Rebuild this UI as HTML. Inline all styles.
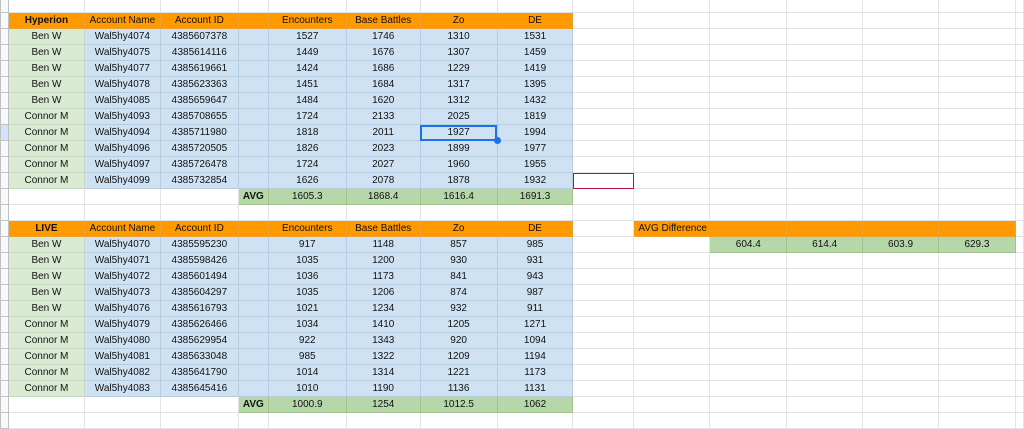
<!DOCTYPE html><html><head><style>
body{margin:0;width:1024px;height:425px;overflow:hidden;background:#fff;font-family:"Liberation Sans",Arial,sans-serif;font-size:10px;color:#111}
table{position:absolute;left:0;top:-4px;border-collapse:collapse;table-layout:fixed}
td{height:15px;border:1px solid #e2e2e2;padding:1px 0 0 0;box-sizing:border-box;text-align:center;white-space:nowrap;overflow:hidden;line-height:14px;vertical-align:middle}
tr{height:16px}
td.rh{background:#f8f9fa;border-color:#c0c0c0}
td.rs{background:#d3e3fd}
.o{background:#ff9900;border-color:#f0a030}
.g{background:#d9ead3;border-color:#c8d8c0}
.b{background:#cfe2f3;border-color:#b8cce0}
.a{background:#b6d7a8;border-color:#a0c090}
.l{text-align:left;padding-left:4px}
.sel{outline:2px solid #1a73e8;outline-offset:-2px;position:relative;overflow:visible}
.red{outline:1px solid #b0104a;outline-offset:-1px}
</style></head><body>
<table>
<colgroup><col style="width:8px"><col style="width:76px"><col style="width:76px"><col style="width:78px"><col style="width:30px"><col style="width:78px"><col style="width:74px"><col style="width:77px"><col style="width:76px"><col style="width:61px"><col style="width:76px"><col style="width:77px"><col style="width:76px"><col style="width:76px"><col style="width:77px"><col style="width:8px"></colgroup>
<tr><td class="rh"></td><td></td><td></td><td></td><td></td><td></td><td></td><td></td><td></td><td></td><td></td><td></td><td></td><td></td><td></td><td></td></tr>
<tr><td class="rh"></td><td class="o"><b>Hyperion</b></td><td class="o">Account Name</td><td class="o">Account ID</td><td class="o"></td><td class="o">Encounters</td><td class="o">Base Battles</td><td class="o">Zo</td><td class="o">DE</td><td></td><td></td><td></td><td></td><td></td><td></td><td></td></tr>
<tr><td class="rh"></td><td class="g">Ben W</td><td class="b">Wal5hy4074</td><td class="b">4385607378</td><td class="b"></td><td class="b">1527</td><td class="b">1746</td><td class="b">1310</td><td class="b">1531</td><td></td><td></td><td></td><td></td><td></td><td></td><td></td></tr>
<tr><td class="rh"></td><td class="g">Ben W</td><td class="b">Wal5hy4075</td><td class="b">4385614116</td><td class="b"></td><td class="b">1449</td><td class="b">1676</td><td class="b">1307</td><td class="b">1459</td><td></td><td></td><td></td><td></td><td></td><td></td><td></td></tr>
<tr><td class="rh"></td><td class="g">Ben W</td><td class="b">Wal5hy4077</td><td class="b">4385619661</td><td class="b"></td><td class="b">1424</td><td class="b">1686</td><td class="b">1229</td><td class="b">1419</td><td></td><td></td><td></td><td></td><td></td><td></td><td></td></tr>
<tr><td class="rh"></td><td class="g">Ben W</td><td class="b">Wal5hy4078</td><td class="b">4385623363</td><td class="b"></td><td class="b">1451</td><td class="b">1684</td><td class="b">1317</td><td class="b">1395</td><td></td><td></td><td></td><td></td><td></td><td></td><td></td></tr>
<tr><td class="rh"></td><td class="g">Ben W</td><td class="b">Wal5hy4085</td><td class="b">4385659647</td><td class="b"></td><td class="b">1484</td><td class="b">1620</td><td class="b">1312</td><td class="b">1432</td><td></td><td></td><td></td><td></td><td></td><td></td><td></td></tr>
<tr><td class="rh"></td><td class="g">Connor M</td><td class="b">Wal5hy4093</td><td class="b">4385708655</td><td class="b"></td><td class="b">1724</td><td class="b">2133</td><td class="b">2025</td><td class="b">1819</td><td></td><td></td><td></td><td></td><td></td><td></td><td></td></tr>
<tr><td class="rh rs"></td><td class="g">Connor M</td><td class="b">Wal5hy4094</td><td class="b">4385711980</td><td class="b"></td><td class="b">1818</td><td class="b">2011</td><td class="b sel">1927<span style="position:absolute;right:-4px;bottom:-4px;width:7px;height:7px;border-radius:50%;background:#1a73e8"></span></td><td class="b">1994</td><td></td><td></td><td></td><td></td><td></td><td></td><td></td></tr>
<tr><td class="rh"></td><td class="g">Connor M</td><td class="b">Wal5hy4096</td><td class="b">4385720505</td><td class="b"></td><td class="b">1826</td><td class="b">2023</td><td class="b">1899</td><td class="b">1977</td><td></td><td></td><td></td><td></td><td></td><td></td><td></td></tr>
<tr><td class="rh"></td><td class="g">Connor M</td><td class="b">Wal5hy4097</td><td class="b">4385726478</td><td class="b"></td><td class="b">1724</td><td class="b">2027</td><td class="b">1960</td><td class="b">1955</td><td></td><td></td><td></td><td></td><td></td><td></td><td></td></tr>
<tr><td class="rh"></td><td class="g">Connor M</td><td class="b">Wal5hy4099</td><td class="b">4385732854</td><td class="b"></td><td class="b">1626</td><td class="b">2078</td><td class="b">1878</td><td class="b">1932</td><td class="red"></td><td></td><td></td><td></td><td></td><td></td><td></td></tr>
<tr><td class="rh"></td><td></td><td></td><td></td><td class="a"><b>AVG</b></td><td class="a">1605.3</td><td class="a">1868.4</td><td class="a">1616.4</td><td class="a">1691.3</td><td></td><td></td><td></td><td></td><td></td><td></td><td></td></tr>
<tr><td class="rh"></td><td></td><td></td><td></td><td></td><td></td><td></td><td></td><td></td><td></td><td></td><td></td><td></td><td></td><td></td><td></td></tr>
<tr><td class="rh"></td><td class="o"><b>LIVE</b></td><td class="o">Account Name</td><td class="o">Account ID</td><td class="o"></td><td class="o">Encounters</td><td class="o">Base Battles</td><td class="o">Zo</td><td class="o">DE</td><td></td><td class="o l" style="border-right-color:#ff9900">AVG Difference</td><td class="o"></td><td class="o"></td><td class="o"></td><td class="o"></td><td></td></tr>
<tr><td class="rh"></td><td class="g">Ben W</td><td class="b">Wal5hy4070</td><td class="b">4385595230</td><td class="b"></td><td class="b">917</td><td class="b">1148</td><td class="b">857</td><td class="b">985</td><td></td><td></td><td class="a">604.4</td><td class="a">614.4</td><td class="a">603.9</td><td class="a">629.3</td><td></td></tr>
<tr><td class="rh"></td><td class="g">Ben W</td><td class="b">Wal5hy4071</td><td class="b">4385598426</td><td class="b"></td><td class="b">1035</td><td class="b">1200</td><td class="b">930</td><td class="b">931</td><td></td><td></td><td></td><td></td><td></td><td></td><td></td></tr>
<tr><td class="rh"></td><td class="g">Ben W</td><td class="b">Wal5hy4072</td><td class="b">4385601494</td><td class="b"></td><td class="b">1036</td><td class="b">1173</td><td class="b">841</td><td class="b">943</td><td></td><td></td><td></td><td></td><td></td><td></td><td></td></tr>
<tr><td class="rh"></td><td class="g">Ben W</td><td class="b">Wal5hy4073</td><td class="b">4385604297</td><td class="b"></td><td class="b">1035</td><td class="b">1206</td><td class="b">874</td><td class="b">987</td><td></td><td></td><td></td><td></td><td></td><td></td><td></td></tr>
<tr><td class="rh"></td><td class="g">Ben W</td><td class="b">Wal5hy4076</td><td class="b">4385616793</td><td class="b"></td><td class="b">1021</td><td class="b">1234</td><td class="b">932</td><td class="b">911</td><td></td><td></td><td></td><td></td><td></td><td></td><td></td></tr>
<tr><td class="rh"></td><td class="g">Connor M</td><td class="b">Wal5hy4079</td><td class="b">4385626466</td><td class="b"></td><td class="b">1034</td><td class="b">1410</td><td class="b">1205</td><td class="b">1271</td><td></td><td></td><td></td><td></td><td></td><td></td><td></td></tr>
<tr><td class="rh"></td><td class="g">Connor M</td><td class="b">Wal5hy4080</td><td class="b">4385629954</td><td class="b"></td><td class="b">922</td><td class="b">1343</td><td class="b">920</td><td class="b">1094</td><td></td><td></td><td></td><td></td><td></td><td></td><td></td></tr>
<tr><td class="rh"></td><td class="g">Connor M</td><td class="b">Wal5hy4081</td><td class="b">4385633048</td><td class="b"></td><td class="b">985</td><td class="b">1322</td><td class="b">1209</td><td class="b">1194</td><td></td><td></td><td></td><td></td><td></td><td></td><td></td></tr>
<tr><td class="rh"></td><td class="g">Connor M</td><td class="b">Wal5hy4082</td><td class="b">4385641790</td><td class="b"></td><td class="b">1014</td><td class="b">1314</td><td class="b">1221</td><td class="b">1173</td><td></td><td></td><td></td><td></td><td></td><td></td><td></td></tr>
<tr><td class="rh"></td><td class="g">Connor M</td><td class="b">Wal5hy4083</td><td class="b">4385645416</td><td class="b"></td><td class="b">1010</td><td class="b">1190</td><td class="b">1136</td><td class="b">1131</td><td></td><td></td><td></td><td></td><td></td><td></td><td></td></tr>
<tr><td class="rh"></td><td></td><td></td><td></td><td class="a"><b>AVG</b></td><td class="a">1000.9</td><td class="a">1254</td><td class="a">1012.5</td><td class="a">1062</td><td></td><td></td><td></td><td></td><td></td><td></td><td></td></tr>
<tr><td class="rh"></td><td></td><td></td><td></td><td></td><td></td><td></td><td></td><td></td><td></td><td></td><td></td><td></td><td></td><td></td><td></td></tr>
</table>
</body></html>
